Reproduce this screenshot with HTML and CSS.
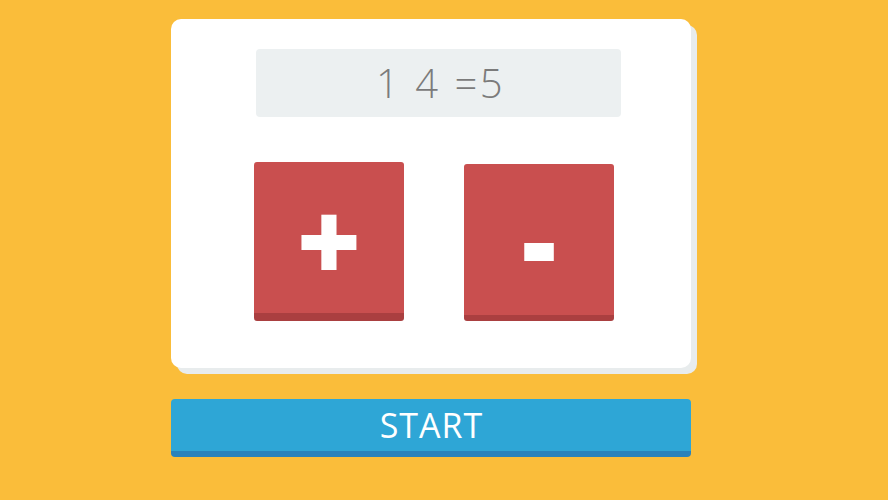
FILE: index.html
```html
<!DOCTYPE html>
<html lang="en">
<head>
<meta charset="utf-8">
<title>Math game</title>
<link rel="stylesheet" href="styles.css">
</head>
<body>
<main class="game">
  <section class="card">
    <div class="display">1 4 =5</div>
    <div class="ops">
      <button class="op op-plus">+</button>
      <button class="op op-minus pressed">-</button>
    </div>
  </section>
  <button class="start">START</button>
</main>
</body>
</html>
```
FILE: styles.css
```css
html, body {
  margin: 0;
  padding: 0;
}
body {
  background: #fabd3a;
  width: 888px;
  height: 500px;
  overflow: hidden;
  font-family: "Open Sans", "DejaVu Sans", sans-serif;
}
.game {
  width: 520px;
  margin-left: 171px;
  padding-top: 19px;
  display: flex;
  flex-direction: column;
}
.card {
  background: #ffffff;
  border-radius: 10px;
  box-shadow: 6px 6px 0 #e8eced;
  height: 349px;
  box-sizing: border-box;
  padding-top: 30px;
  display: flex;
  flex-direction: column;
}
.display {
  margin-left: 85px;
  width: 365px;
  height: 68px;
  background: #ecf0f1;
  border-radius: 4px;
  color: #7b7b7b;
  font-weight: 300;
  font-size: 40px;
  line-height: 68px;
  text-align: center;
  letter-spacing: 2.5px;
  word-spacing: 1px;
  text-indent: 4px;
}
.ops {
  margin-top: 45px;
  margin-left: 83px;
  display: flex;
  gap: 60px;
  align-items: flex-end;
  height: 159px;
}
.op {
  width: 150px;
  height: 159px;
  border: none;
  border-bottom: 8px solid #aa3f40;
  border-radius: 3px;
  background: #c94f4f;
  color: #ffffff;
  font-family: "DejaVu Sans", sans-serif;
  font-weight: bold;
  padding: 0;
  box-sizing: border-box;
  display: flex;
  align-items: center;
  justify-content: center;
  -webkit-text-stroke: 6px #ffffff;
}
.op-plus {
  font-size: 78px;
  line-height: 1;
  padding-top: 4px;
}
.op-minus {
  font-size: 70px;
  line-height: 1;
  padding-top: 17px;
  -webkit-text-stroke: 8px #ffffff;
}
.op.pressed {
  height: 157px;
  border-bottom-width: 6px;
}
.start {
  margin-top: 31px;
  width: 520px;
  height: 58px;
  border: none;
  border-bottom: 6px solid #2a82bb;
  border-radius: 4px;
  background: #2ea6d6;
  color: #ffffff;
  font-family: "Open Sans", sans-serif;
  font-size: 34px;
  letter-spacing: 1px;
  text-indent: 1px;
  padding: 0;
  box-sizing: border-box;
  line-height: 52px;
}
```
